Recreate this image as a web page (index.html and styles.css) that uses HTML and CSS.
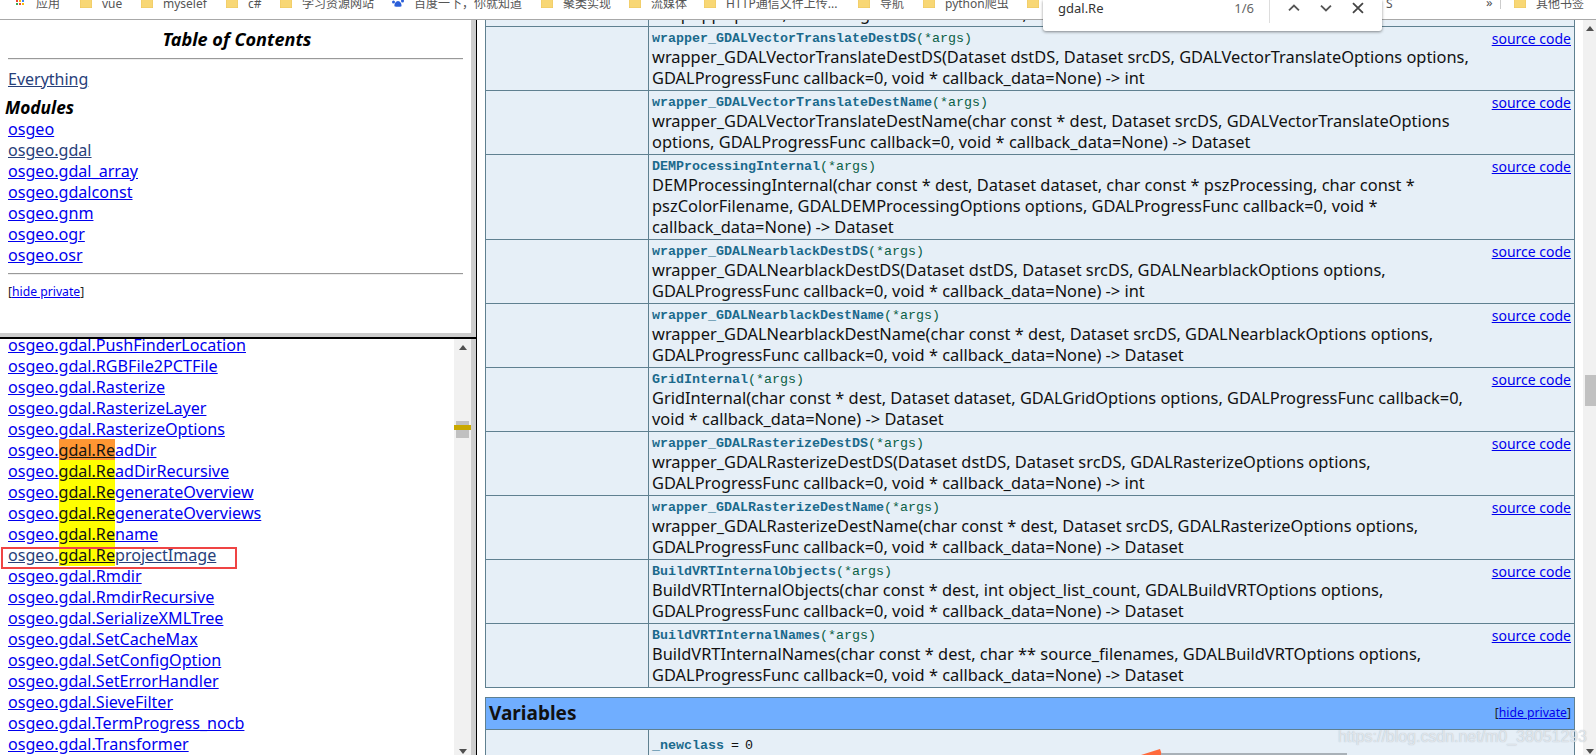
FILE: index.html
```html
<!DOCTYPE html>
<html lang="en">
<head>
<meta charset="utf-8">
<title>osgeo.gdal</title>
<link rel="stylesheet" href="styles.css">
</head>
<body>
<div class="bookmarks">
  <div class="bm"><svg class="ic" viewBox="0 0 12 12"><g><rect x="0" y="0" width="3" height="3" fill="#ea4335"/><rect x="4.5" y="0" width="3" height="3" fill="#fbbc05"/><rect x="9" y="0" width="3" height="3" fill="#4285f4"/><rect x="0" y="4.5" width="3" height="3" fill="#34a853"/><rect x="4.5" y="4.5" width="3" height="3" fill="#ea4335"/><rect x="9" y="4.5" width="3" height="3" fill="#fbbc05"/></g></svg><span>应用</span></div>
  <div class="bm"><svg class="ic"><use href="#folder"/></svg><span>vue</span></div>
  <div class="bm"><svg class="ic"><use href="#folder"/></svg><span>myselef</span></div>
  <div class="bm"><svg class="ic"><use href="#folder"/></svg><span>c#</span></div>
  <div class="bm"><svg class="ic"><use href="#folder"/></svg><span>学习资源网站</span></div>
  <div class="bm"><svg class="ic" viewBox="0 0 12 14"><circle cx="3" cy="4" r="1.6" fill="#2b5fd9"/><circle cx="7.500" cy="3" r="1.600" fill="#2b5fd9"/><circle cx="1.500" cy="8" r="1.500" fill="#2b5fd9"/><circle cx="10.500" cy="7" r="1.500" fill="#2b5fd9"/><path d="M6 7c2 0 4 3 3.500 5-.5 1-2 .7-3.500.7S3 13 2.500 12C2 10 4 7 6 7z" fill="#2b5fd9"/></svg><span>百度一下，你就知道</span></div>
  <div class="bm"><svg class="ic"><use href="#folder"/></svg><span>聚类实现</span></div>
  <div class="bm"><svg class="ic"><use href="#folder"/></svg><span>流媒体</span></div>
  <div class="bm"><svg class="ic"><use href="#folder"/></svg><span>HTTP通信文件上传...</span></div>
  <div class="bm"><svg class="ic"><use href="#folder"/></svg><span>导航</span></div>
  <div class="bm"><svg class="ic"><use href="#folder"/></svg><span>python爬虫</span></div>
  <div class="bm"><svg class="ic"><use href="#folder"/></svg><span class="bm-under">S</span></div>
  <div class="bm-more">»</div>
  <div class="bm-other"><svg class="ic"><use href="#folder"/></svg><span>其他书签</span></div>
</div>
<svg class="defs" width="0" height="0"><defs><symbol id="folder" viewBox="0 0 12 14"><path d="M0 1h4.500l1.500 2h6v11H0z" fill="#f8d775" stroke="#e6bd55" stroke-width=".6"/></symbol></defs></svg>

<div class="app">
  <aside class="left">
    <section class="toc">
      <h1 class="toc-title">Table of Contents</h1>
      <div class="rule"></div>
      <a class="link hover ever" href="#">Everything</a>
      <h2 class="mod-title">Modules</h2>
      <ul class="mods">
        <li><a class="link" href="#">osgeo</a></li>
        <li><a class="link hover" href="#">osgeo.gdal</a></li>
        <li><a class="link" href="#">osgeo.gdal_array</a></li>
        <li><a class="link" href="#">osgeo.gdalconst</a></li>
        <li><a class="link" href="#">osgeo.gnm</a></li>
        <li><a class="link" href="#">osgeo.ogr</a></li>
        <li><a class="link" href="#">osgeo.osr</a></li>
      </ul>
      <div class="rule rule-b"></div>
      <div class="small small-toc">[<a href="#">hide private</a>]</div>
    </section>
    <div class="split"></div>
    <section class="list-frame">
      <ul class="funcs">
        <li><a class="link" href="#">osgeo.gdal.PushFinderLocation</a></li>
        <li><a class="link" href="#">osgeo.gdal.RGBFile2PCTFile</a></li>
        <li><a class="link" href="#">osgeo.gdal.Rasterize</a></li>
        <li><a class="link" href="#">osgeo.gdal.RasterizeLayer</a></li>
        <li><a class="link" href="#">osgeo.gdal.RasterizeOptions</a></li>
        <li><a class="link" href="#">osgeo.<mark class="cur">gdal.Re</mark>adDir</a></li>
        <li><a class="link" href="#">osgeo.<mark>gdal.Re</mark>adDirRecursive</a></li>
        <li><a class="link" href="#">osgeo.<mark>gdal.Re</mark>generateOverview</a></li>
        <li><a class="link" href="#">osgeo.<mark>gdal.Re</mark>generateOverviews</a></li>
        <li><a class="link" href="#">osgeo.<mark>gdal.Re</mark>name</a></li>
        <li class="boxed"><a class="link hover" href="#">osgeo.<mark>gdal.Re</mark>projectImage</a></li>
        <li><a class="link" href="#">osgeo.gdal.Rmdir</a></li>
        <li><a class="link" href="#">osgeo.gdal.RmdirRecursive</a></li>
        <li><a class="link" href="#">osgeo.gdal.SerializeXMLTree</a></li>
        <li><a class="link" href="#">osgeo.gdal.SetCacheMax</a></li>
        <li><a class="link" href="#">osgeo.gdal.SetConfigOption</a></li>
        <li><a class="link" href="#">osgeo.gdal.SetErrorHandler</a></li>
        <li><a class="link" href="#">osgeo.gdal.SieveFilter</a></li>
        <li><a class="link" href="#">osgeo.gdal.TermProgress_nocb</a></li>
        <li><a class="link" href="#">osgeo.gdal.Transformer</a></li>
      </ul>
      <div class="sbar sbar-list">
        <span class="arr-up"></span>
        <span class="arr-down"></span>
        <span class="thumb thumb-list"></span>
        <span class="find-mark"></span>
      </div>
    </section>
  </aside>

  <main class="right">
    <div class="doc">
      <table class="tbl tbl-fn">
        <colgroup><col class="col-a"><col></colgroup>
        <tr><td class="c1"></td><td class="c2"><div class="row"><div class="sig"><div class="nmline"><span class="nm">wrapper_GDALWarpDestName</span><span class="ar">(*args)</span></div>wrapper_GDALWarpDestName(char const * dest, int object_list_count, GDALWarpAppOptions<br>warpAppOptions, GDALProgressFunc callback=0, void * callback_data=None) -&gt; Dataset</div><a class="src" href="#">source code</a></div></td></tr>
        <tr><td class="c1"></td><td class="c2"><div class="row"><div class="sig"><div class="nmline"><span class="nm">wrapper_GDALVectorTranslateDestDS</span><span class="ar">(*args)</span></div>wrapper_GDALVectorTranslateDestDS(Dataset dstDS, Dataset srcDS, GDALVectorTranslateOptions options,<br>GDALProgressFunc callback=0, void * callback_data=None) -&gt; int</div><a class="src" href="#">source code</a></div></td></tr>
        <tr><td class="c1"></td><td class="c2"><div class="row"><div class="sig"><div class="nmline"><span class="nm">wrapper_GDALVectorTranslateDestName</span><span class="ar">(*args)</span></div>wrapper_GDALVectorTranslateDestName(char const * dest, Dataset srcDS, GDALVectorTranslateOptions<br>options, GDALProgressFunc callback=0, void * callback_data=None) -&gt; Dataset</div><a class="src" href="#">source code</a></div></td></tr>
        <tr><td class="c1"></td><td class="c2"><div class="row"><div class="sig"><div class="nmline"><span class="nm">DEMProcessingInternal</span><span class="ar">(*args)</span></div>DEMProcessingInternal(char const * dest, Dataset dataset, char const * pszProcessing, char const *<br>pszColorFilename, GDALDEMProcessingOptions options, GDALProgressFunc callback=0, void *<br>callback_data=None) -&gt; Dataset</div><a class="src" href="#">source code</a></div></td></tr>
        <tr><td class="c1"></td><td class="c2"><div class="row"><div class="sig"><div class="nmline"><span class="nm">wrapper_GDALNearblackDestDS</span><span class="ar">(*args)</span></div>wrapper_GDALNearblackDestDS(Dataset dstDS, Dataset srcDS, GDALNearblackOptions options,<br>GDALProgressFunc callback=0, void * callback_data=None) -&gt; int</div><a class="src" href="#">source code</a></div></td></tr>
        <tr><td class="c1"></td><td class="c2"><div class="row"><div class="sig"><div class="nmline"><span class="nm">wrapper_GDALNearblackDestName</span><span class="ar">(*args)</span></div>wrapper_GDALNearblackDestName(char const * dest, Dataset srcDS, GDALNearblackOptions options,<br>GDALProgressFunc callback=0, void * callback_data=None) -&gt; Dataset</div><a class="src" href="#">source code</a></div></td></tr>
        <tr><td class="c1"></td><td class="c2"><div class="row"><div class="sig"><div class="nmline"><span class="nm">GridInternal</span><span class="ar">(*args)</span></div>GridInternal(char const * dest, Dataset dataset, GDALGridOptions options, GDALProgressFunc callback=0,<br>void * callback_data=None) -&gt; Dataset</div><a class="src" href="#">source code</a></div></td></tr>
        <tr><td class="c1"></td><td class="c2"><div class="row"><div class="sig"><div class="nmline"><span class="nm">wrapper_GDALRasterizeDestDS</span><span class="ar">(*args)</span></div>wrapper_GDALRasterizeDestDS(Dataset dstDS, Dataset srcDS, GDALRasterizeOptions options,<br>GDALProgressFunc callback=0, void * callback_data=None) -&gt; int</div><a class="src" href="#">source code</a></div></td></tr>
        <tr><td class="c1"></td><td class="c2"><div class="row"><div class="sig"><div class="nmline"><span class="nm">wrapper_GDALRasterizeDestName</span><span class="ar">(*args)</span></div>wrapper_GDALRasterizeDestName(char const * dest, Dataset srcDS, GDALRasterizeOptions options,<br>GDALProgressFunc callback=0, void * callback_data=None) -&gt; Dataset</div><a class="src" href="#">source code</a></div></td></tr>
        <tr><td class="c1"></td><td class="c2"><div class="row"><div class="sig"><div class="nmline"><span class="nm">BuildVRTInternalObjects</span><span class="ar">(*args)</span></div>BuildVRTInternalObjects(char const * dest, int object_list_count, GDALBuildVRTOptions options,<br>GDALProgressFunc callback=0, void * callback_data=None) -&gt; Dataset</div><a class="src" href="#">source code</a></div></td></tr>
        <tr><td class="c1"></td><td class="c2"><div class="row"><div class="sig"><div class="nmline"><span class="nm">BuildVRTInternalNames</span><span class="ar">(*args)</span></div>BuildVRTInternalNames(char const * dest, char ** source_filenames, GDALBuildVRTOptions options,<br>GDALProgressFunc callback=0, void * callback_data=None) -&gt; Dataset</div><a class="src" href="#">source code</a></div></td></tr>
      </table>
      <table class="tbl tbl-var">
        <colgroup><col class="col-a"><col></colgroup>
        <tr><th colspan="2" class="var-head"><div class="var-row"><span class="var-title">Variables</span><span class="small">[<a href="#">hide private</a>]</span></div></th></tr>
        <tr><td class="c1"></td><td class="c2 var-cell"><span class="nm">_newclass</span><span class="eq"> = 0</span></td></tr>
      </table>
    </div>
    <div class="sbar sbar-main">
      <span class="arr-up"></span>
      <span class="arr-down"></span>
      <span class="thumb thumb-main"></span>
    </div>
  </main>
</div>

<div class="findbar">
  <span class="find-text">gdal.Re</span>
  <span class="find-count">1/6</span>
  <span class="find-sep"></span>
  <svg class="find-btn" viewBox="0 0 16 16"><path d="M3 10.500l5-5 5 5" fill="none" stroke="#555" stroke-width="1.800"/></svg>
  <svg class="find-btn" viewBox="0 0 16 16"><path d="M3 5.500l5 5 5-5" fill="none" stroke="#555" stroke-width="1.800"/></svg>
  <svg class="find-btn" viewBox="0 0 16 16"><path d="M3 3l10 10M13 3L3 13" fill="none" stroke="#444" stroke-width="1.800"/></svg>
</div>

<svg class="arrow-frag" viewBox="0 0 210 6"><path d="M0 6 L19 0 L21 6z" fill="#ff6a3c"/><rect x="20" y="4" width="186" height="2" fill="#a9b1b8"/></svg>
<div class="watermark">https://blog.csdn.net/m0_38051293</div>
</body>
</html>
```

FILE: styles.css
```css
*, *::before, *::after { box-sizing: border-box; }
html, body { margin: 0; padding: 0; height: 755px; overflow: hidden; background: #fff; }
body { font-family: "Noto Sans", "Noto Sans CJK SC", sans-serif; font-size: 16px; color: #111; position: relative; }

.defs { position: absolute; }

/* bookmarks bar */
.bookmarks {
  height: 20px;
  border-bottom: 1px solid #a8a8a8;
  overflow: hidden;
  display: grid;
  grid-template-columns: 66px 61px 85px 54px 112px 149px 88px 75px 154px 65px 104px 459px 15px 1fr;
  padding-left: 14px;
  align-items: end;
  align-content: end;
  padding-bottom: 11px;
  background: #fff;
}
.bm, .bm-other { display: flex; align-items: flex-end; gap: 10px; font-size: 12px; line-height: 14px; color: #555; white-space: nowrap; }
.bm span, .bm-other span { transform: translateY(3px); }
.ic { width: 12px; height: 14px; flex: none; }
.bm:first-child .ic { height: 8px; }
.bm-under { padding-left: 337px; }
.bm-more { font-size: 13px; line-height: 14px; color: #555; border-right: 1px solid #ccc; transform: translateY(1px); }
.bm-other { padding-left: 13px; }

/* frames */
.app { display: grid; grid-template-columns: 477px 1fr; height: 735px; }
.left { display: flex; flex-direction: column; border-right: 1px solid #000; background: #fff; height: 735px; position: relative; }
.left::after { content: ""; position: absolute; top: 0; bottom: 0; right: 0; width: 5px; background: #cdcdcd; }
.toc { height: 313px; padding-right: 5px; overflow: hidden; }
.toc-title { margin: 9px 0 0; height: 21px; line-height: 21px; font-size: 18.100px; font-weight: 700; font-style: italic; text-align: center; color: #000; padding-left: 3px; }
.rule { margin: 8px 8px 0; height: 2px; border-top: 1px solid #999; border-bottom: 1px solid #eee; }
.link { color: #0000ee; text-decoration: underline; }
.hover { color: #27407a; }
.ever { display: block; margin: 9px 0 0 8px; height: 21px; line-height: 21px; width: max-content; }
.mod-title { margin: 7px 0 0 5px; height: 21px; line-height: 21px; font-size: 17.300px; font-weight: 700; font-style: italic; color: #000; }
.mods, .funcs { list-style: none; margin: 0; padding: 0; font-size: 16.130px; }
.mods { margin-top: 1px; }
.mods li, .funcs li { height: 21px; line-height: 21px; padding-left: 8px; white-space: nowrap; }
.rule-b { margin-top: 7px; }
.small { font-size: 12.200px; font-weight: 400; color: #222; white-space: nowrap; }
.small a { color: #0000ee; }
.small-toc { margin: 8px 0 0 8px; line-height: 17px; }

.split { height: 6px; flex: none; background: #cdcdcd; border-bottom: 2px solid #000; position: relative; z-index: 1; }
.list-frame { flex: 1; position: relative; overflow: hidden; padding-right: 5px; }
.funcs { margin-top: -4px; }
mark { background: #ffff00; color: #111; text-decoration: underline; }
mark.cur { background: #ff9632; }
.boxed { position: relative; }
.boxed::after { content: ""; position: absolute; left: 1px; top: 2px; width: 236px; height: 22px; border: 2px solid #ef4444; }

/* scrollbars */
.sbar { position: absolute; background: #f1f1f1; top: 0; bottom: 0; }
.sbar-list { right: 5px; width: 17px; }
.sbar-main { left: 1106px; width: 13px; top: 0; }
.arr-up, .arr-down { position: absolute; left: 50%; margin-left: -4px; width: 0; height: 0; border-left: 4px solid transparent; border-right: 4px solid transparent; }
.arr-up { top: 6px; border-bottom: 5px solid #505050; }
.arr-down { bottom: 1px; border-top: 5px solid #505050; }
.thumb { position: absolute; background: #c1c1c1; }
.thumb-list { left: 2px; width: 13px; top: 82px; height: 17px; }
.find-mark { position: absolute; left: 0; width: 17px; top: 86px; height: 5px; background: #c9a800; }
.thumb-main { left: 2px; right: 0; top: 355px; height: 31px; }

/* document */
.right { position: relative; overflow: hidden; background: #fff; }
.doc { width: 1106px; padding: 0 8px; margin-top: -58px; }
.tbl { border-collapse: collapse; width: 1090px; table-layout: fixed; background: #e6eff7; }
.tbl td, .tbl th { border: 1px solid #5f8090; padding: 0; }
.col-a { width: 163px; }
.c2 { padding: 1px 3px 2px 3px !important; vertical-align: top; }
.row { display: flex; justify-content: space-between; }
.sig { font-size: 16.400px; line-height: 21px; white-space: nowrap; color: #111; }
.nmline { height: 18px; line-height: 16px; }
.nm { font-family: "Liberation Mono", monospace; font-size: 13.330px; font-weight: 700; color: #1b6a8c; }
.ar { font-family: "Liberation Mono", monospace; font-size: 13.330px; color: #0a6045; }
.eq { font-family: "Liberation Mono", monospace; font-size: 13.330px; color: #111; letter-spacing: -1px; }
.src { font-size: 14px; line-height: 21px; color: #0000ee; white-space: nowrap; }
.tbl-var { margin-top: 9px; }
.var-head { background: #70aeff; height: 32px; text-align: left; padding: 0 3px !important; }
.var-row { display: flex; justify-content: space-between; align-items: center; transform: translateY(-1px); }
.var-title { font-size: 19px; font-weight: 700; color: #111; }
.var-cell { height: 40px; line-height: 18px; padding-top: 4px !important; }

/* find-in-page */
.findbar { position: absolute; left: 1043px; top: 0; width: 339px; height: 31px; background: #fff; border-radius: 0 0 3px 3px; box-shadow: 0 1px 3px rgba(0,0,0,.45); display: flex; align-items: flex-start; padding-left: 15px; }
.find-text { font-size: 13px; line-height: 16px; color: #333; width: 177px; }
.find-count { font-size: 13px; line-height: 16px; color: #666; width: 35px; }
.find-sep { width: 1px; height: 23px; background: #ddd; margin-right: 16px; }
.find-btn { width: 16px; height: 16px; margin-right: 16px; }

/* overlays */
.arrow-frag { position: absolute; left: 1141px; top: 749px; width: 210px; height: 6px; }
.watermark { position: absolute; left: 1338px; top: 728px; font-family: "Liberation Sans", sans-serif; font-size: 15.950px; line-height: 18px; color: rgba(235,240,245,.8); text-shadow: 0 0 1px rgba(120,130,140,.55); white-space: nowrap; }
```
